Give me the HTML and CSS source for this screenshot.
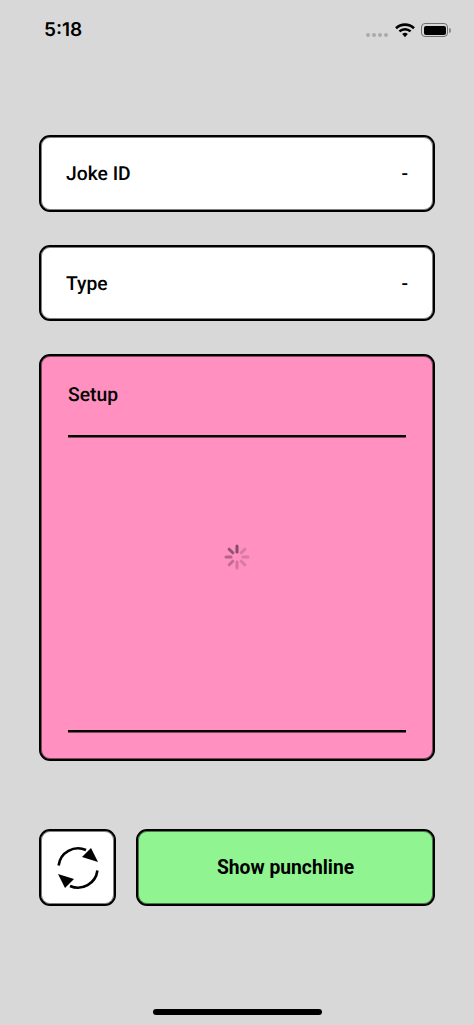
FILE: index.html
```html
<!DOCTYPE html>
<html lang="en">
<head>
    <meta charset="UTF-8">
    <meta name="viewport" content="width=device-width, initial-scale=1.0">
    <title>Joke</title>
    <link rel="stylesheet" href="styles.css">
</head>
<body>
<div class="screen">
    <div class="status-bar">
        <span class="time">5:18</span>
        <div class="status-icons">
            <div class="dots"><i></i><i></i><i></i><i></i></div>
            <svg class="wifi" width="20" height="15" viewBox="0 0 20 15">
                <path d="M1 5.2 A13 13 0 0 1 19 5.2" fill="none" stroke="#000" stroke-width="2.6"/>
                <path d="M4.4 8.4 A8.2 8.2 0 0 1 15.6 8.4" fill="none" stroke="#000" stroke-width="2.6"/>
                <path d="M7.2 11 L10 14.2 L12.8 11 A4 4 0 0 0 7.2 11 Z" fill="#000"/>
            </svg>
            <div class="battery"><div class="battery-fill"></div></div>
            <div class="battery-cap"></div>
        </div>
    </div>

    <div class="content">
        <div class="card row">
            <span>Joke ID</span>
            <span>-</span>
        </div>
        <div class="card row">
            <span>Type</span>
            <span>-</span>
        </div>
        <div class="card setup">
            <div class="setup-title">Setup</div>
            <div class="setup-body">
                <svg class="spinner" width="26" height="26" viewBox="0 0 26 26">
                    <g stroke-width="3" stroke-linecap="round" stroke="#6b3a55">
                        <line x1="13" y1="2" x2="13" y2="8" opacity="0.8"/>
                        <line x1="20.8" y1="5.2" x2="17.2" y2="8.8" opacity="0.25"/>
                        <line x1="24" y1="13" x2="19" y2="13" opacity="0.25"/>
                        <line x1="20.8" y1="20.8" x2="17.2" y2="17.2" opacity="0.25"/>
                        <line x1="13" y1="24" x2="13" y2="18" opacity="0.3"/>
                        <line x1="5.2" y1="20.8" x2="8.8" y2="17.2" opacity="0.4"/>
                        <line x1="2" y1="13" x2="7" y2="13" opacity="0.5"/>
                        <line x1="5.2" y1="5.2" x2="8.8" y2="8.8" opacity="0.7"/>
                    </g>
                </svg>
            </div>
        </div>
        <div class="actions">
            <button class="refresh">
                <svg width="44" height="44" viewBox="0 0 44 44">
                    <path d="M2.6 19.5 A19.6 19.6 0 0 1 30 4" fill="none" stroke="#000" stroke-width="2.6"/>
                    <path d="M41.4 24.5 A19.6 19.6 0 0 1 14 40" fill="none" stroke="#000" stroke-width="2.6"/>
                    <path d="M35 2 L42 16 L26 11 Z" fill="#000"/>
                    <path d="M9 42 L2 28 L18 33 Z" fill="#000"/>
                </svg>
            </button>
            <button class="punchline">Show punchline</button>
        </div>
    </div>

    <div class="home-bar"></div>
</div>
</body>
</html>
```

FILE: styles.css
```css
* {
    box-sizing: border-box;
    margin: 0;
    padding: 0;
}

body {
    font-family: Roboto, sans-serif;
    background-color: #d8d8d8;
    color: #000;
    text-rendering: geometricPrecision;
}

.screen {
    width: 474px;
    height: 1025px;
    display: flex;
    flex-direction: column;
}

.status-bar {
    height: 60px;
    padding: 18px 23px 0 44px;
    display: flex;
    justify-content: space-between;
    align-items: flex-start;
}

.time {
    font-family: Inter, sans-serif;
    font-size: 19px;
    font-weight: 600;
    line-height: 24px;
}

.status-icons {
    display: flex;
    align-items: center;
    height: 24px;
}

.dots {
    display: flex;
    gap: 2px;
    margin-right: 7px;
    margin-top: 10px;
}

.dots i {
    width: 4px;
    height: 4px;
    border-radius: 50%;
    background-color: #ababab;
}

.wifi {
    margin-right: 6px;
}

.battery {
    width: 27px;
    height: 14px;
    border: 1px solid #6e6e6e;
    border-radius: 4px;
    padding: 1.5px;
}

.battery-fill {
    width: 100%;
    height: 100%;
    background-color: #000;
    border-radius: 2px;
}

.battery-cap {
    width: 2px;
    height: 5px;
    margin-left: 1px;
    background-color: #8a8a8a;
    border-radius: 0 2px 2px 0;
}

.content {
    padding: 75px 39px 0;
    display: flex;
    flex-direction: column;
    gap: 33px;
}

.card {
    background-color: #fff;
    border: 2px solid #000;
    border-radius: 11px;
    box-shadow: inset 0 0 0 1px rgba(0, 0, 0, 0.5);
}

.row {
    height: 76.5px;
    padding: 1px 25px 0;
    display: flex;
    justify-content: space-between;
    align-items: center;
    font-size: 19.3px;
    font-weight: 500;
}

.setup {
    height: 407px;
    padding: 27px 27px 27px;
    background-color: #ff90c0;
    display: flex;
    flex-direction: column;
}

.setup-title {
    font-size: 19.3px;
    font-weight: 500;
    line-height: 24px;
    height: 54px;
    border-bottom: 2px solid #000;
    box-shadow: 0 1px 0 rgba(0, 0, 0, 0.5);
}

.setup-body {
    flex: 1;
    padding-bottom: 54px;
    display: flex;
    justify-content: center;
    align-items: center;
    border-bottom: 2px solid #000;
    box-shadow: 0 1px 0 rgba(0, 0, 0, 0.5);
}

.actions {
    margin-top: 35px;
    display: flex;
    gap: 20px;
}

button {
    height: 77px;
    border: 2px solid #000;
    border-radius: 11px;
    box-shadow: inset 0 0 0 1px rgba(0, 0, 0, 0.5);
    font-family: Roboto, sans-serif;
    color: #000;
}

.refresh {
    width: 77px;
    flex-shrink: 0;
    background-color: #fff;
    display: flex;
    justify-content: center;
    align-items: center;
}

.punchline {
    flex: 1;
    background-color: #90f490;
    font-size: 19.3px;
    font-weight: 700;
}

.home-bar {
    width: 169px;
    height: 6px;
    border-radius: 3px;
    background-color: #000;
    margin: auto auto 10px;
}
```
